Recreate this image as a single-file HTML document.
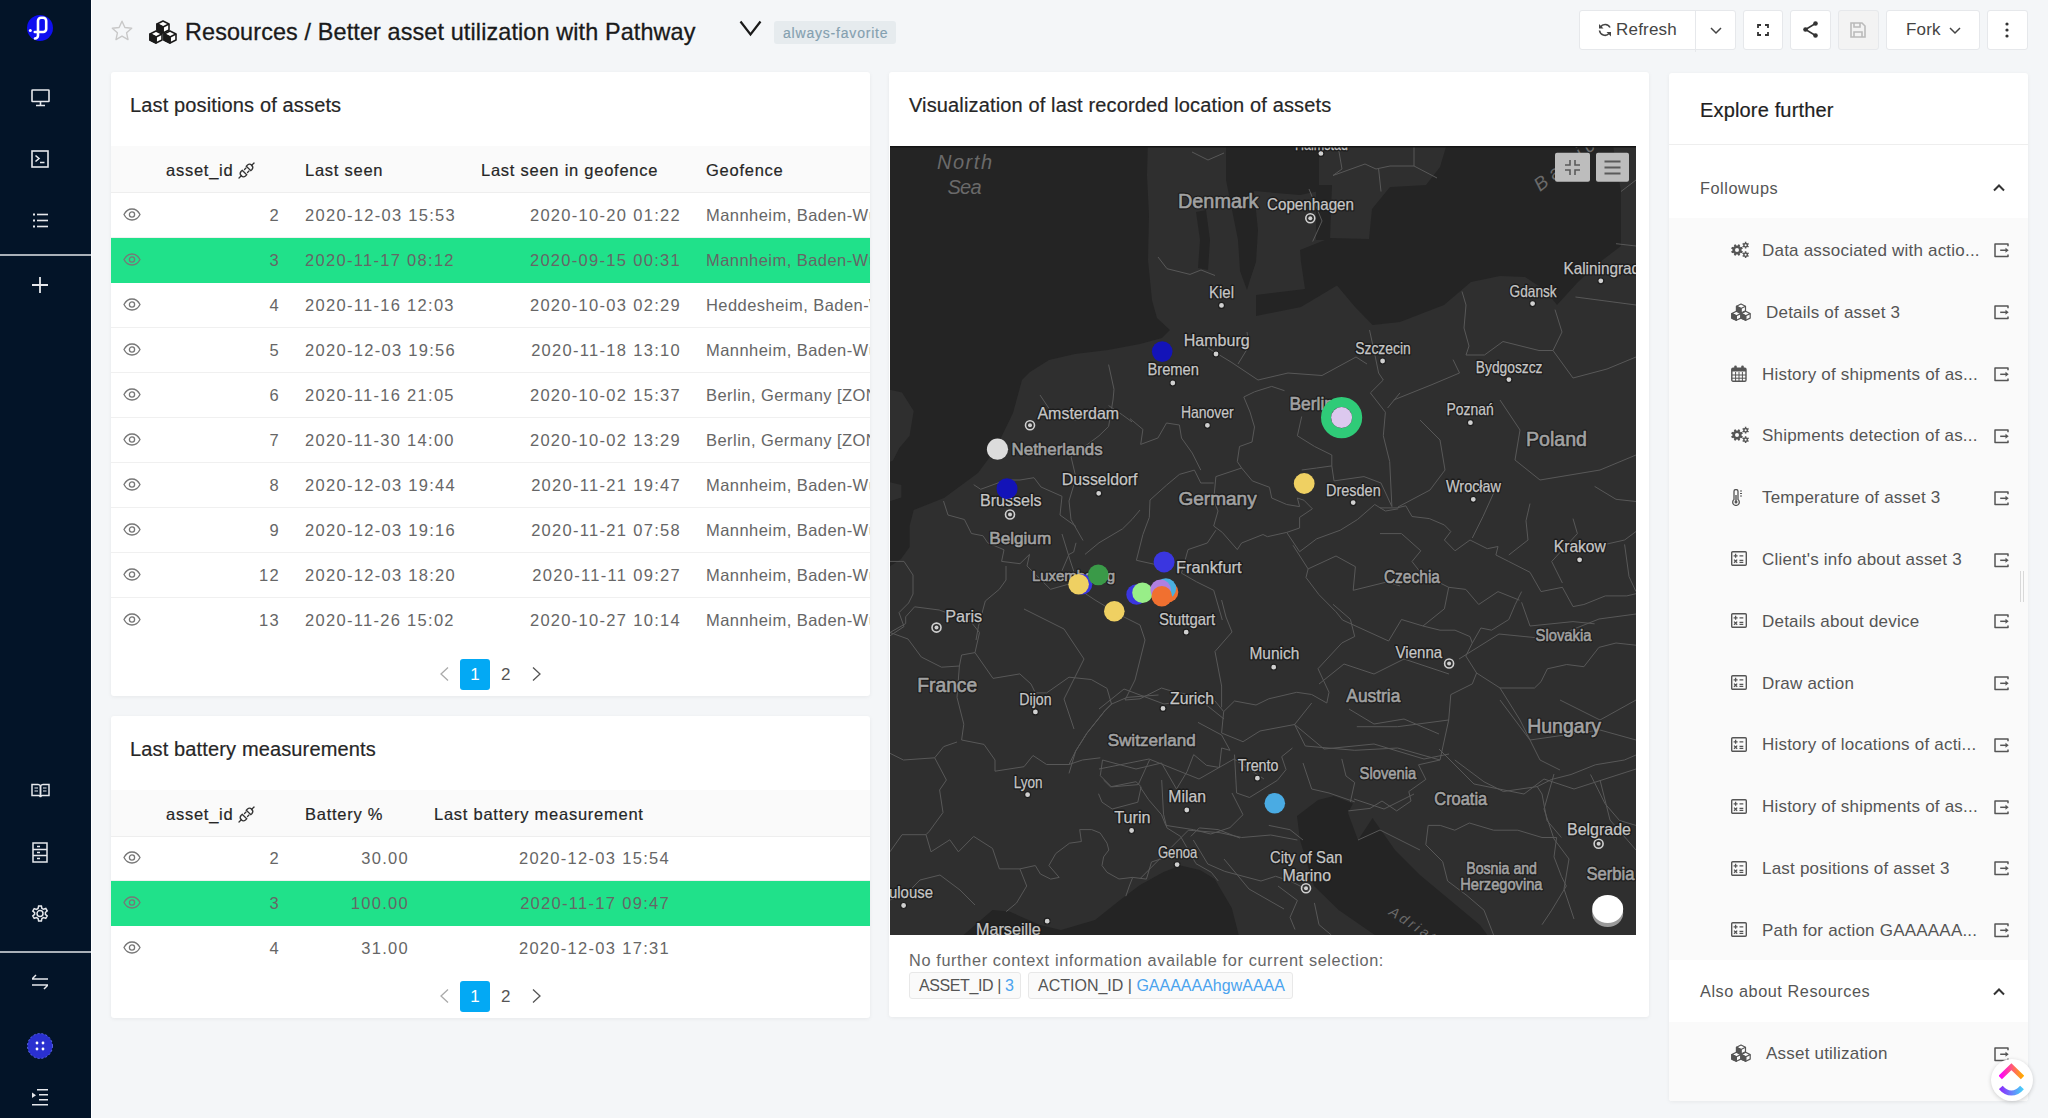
<!DOCTYPE html>
<html><head><meta charset="utf-8">
<style>
*{box-sizing:border-box;margin:0;padding:0}
html,body{width:2048px;height:1118px;overflow:hidden;background:#f4f6f8;font-family:"Liberation Sans",sans-serif;position:relative}
.a{position:absolute}
.t{position:absolute;white-space:nowrap;line-height:1}
.sb{left:0;top:0;width:91px;height:1118px;background:#031428}
.sbl{left:0;width:91px;height:1.5px;background:#a9b0b8}
.card{background:#fff;border-radius:3px;box-shadow:0 1px 4px rgba(0,0,0,0.06)}
.ctitle{font-size:20px;letter-spacing:0.14px;color:#262626;-webkit-text-stroke:0.2px #262626}
.thead{background:#fafafa;border-bottom:1px solid #eee}
.th{font-size:16.5px;letter-spacing:0.75px;color:#262626;-webkit-text-stroke:0.2px #262626}
.row{left:0;width:759px;height:45px;border-bottom:1px solid #f0f0f0}
.row.sel{background:#20e18a;border-bottom-color:#20e18a}
.td{font-size:16.5px;letter-spacing:1.3px;color:#666}
.pg1{width:30px;height:31px;background:#03a9f4;border-radius:3px;color:#fff;font-size:17px;text-align:center;line-height:31px}
.btn{background:#fff;border:1px solid #e6e8eb;border-radius:3px;top:10px;height:40px}
</style></head>
<body>
<!-- SIDEBAR -->
<div class="a sb"></div>
<div class="a" style="left:91px;top:0;width:1px;height:1118px;background:#fff"></div>
<div class="a sbl" style="top:254px"></div>
<div class="a sbl" style="top:951px"></div>
<svg class="a" style="left:27px;top:15px" width="26" height="26" viewBox="0 0 26 26"><circle cx="13" cy="13" r="13" fill="#0f0ff0"/><g fill="none" stroke="#fff" stroke-width="2.6" stroke-linecap="round"><path d="M11 17V5.8a3 3 0 0 1 3-3h2.2a3 3 0 0 1 3 3v8.2a3 3 0 0 1-3 3H7.8"/><path d="M11 17v3.5a3 3 0 0 1-3 3"/></g><circle cx="3.3" cy="15.5" r="1.5" fill="#fff"/></svg><svg class="a" style="left:31px;top:89px" width="19" height="18" viewBox="0 0 19 18"><g fill="none" stroke="#e6e8ec" stroke-width="1.6"><rect x="1" y="1" width="17" height="11.5" rx="0.5"/><path d="M9.5 12.5v3.5M5 16.5h9"/></g></svg><svg class="a" style="left:31px;top:150px" width="18" height="18" viewBox="0 0 18 18"><g fill="none" stroke="#e6e8ec" stroke-width="1.6"><rect x="1" y="1" width="16" height="16"/><path d="M4.5 5.5l3.5 3-3.5 3M9 12.5h4.5"/></g></svg><svg class="a" style="left:33px;top:213px" width="15" height="15" viewBox="0 0 15 15"><g fill="#e6e8ec"><rect x="0" y="0.5" width="2" height="2"/><rect x="0" y="6.5" width="2" height="2"/><rect x="0" y="12.5" width="2" height="2"/><rect x="4" y="0.7" width="11" height="1.6"/><rect x="4" y="6.7" width="11" height="1.6"/><rect x="4" y="12.7" width="11" height="1.6"/></g></svg><svg class="a" style="left:32px;top:277px" width="16" height="16" viewBox="0 0 16 16"><g stroke="#e6e8ec" stroke-width="1.8"><path d="M8 0v16M0 8h16"/></g></svg><svg class="a" style="left:31px;top:782px" width="19" height="16" viewBox="0 0 19 16"><g fill="none" stroke="#e6e8ec" stroke-width="1.5"><path d="M1 2.5h6a2.5 2.5 0 0 1 2.5 2V15a2 2 0 0 0-2-1.5H1z"/><path d="M18 2.5h-6a2.5 2.5 0 0 0-2.5 2V15a2 2 0 0 1 2-1.5H18z"/><path d="M3.5 6h3.5M3.5 9h3.5M12 6h3.5M12 9h3.5" stroke-width="1.2"/></g></svg><svg class="a" style="left:32px;top:842px" width="16" height="21" viewBox="0 0 16 21"><g fill="none" stroke="#e6e8ec" stroke-width="1.5"><rect x="1" y="1" width="14" height="19"/><path d="M1 7.5h14M1 13.5h14M5 4.5h3M5 10.5h3M5 16.5h3" stroke-width="1.3"/></g></svg><svg class="a" style="left:30px;top:905px" width="20" height="18" viewBox="0 0 20 18"><g fill="none" stroke="#e6e8ec" stroke-width="1.5"><path d="M8.6 1h2.8l.5 2.4 1.6.9 2.3-.8 1.4 2.4-1.8 1.6v1.9l1.8 1.6-1.4 2.4-2.3-.8-1.6.9-.5 2.4H8.6l-.5-2.4-1.6-.9-2.3.8-1.4-2.4 1.8-1.6V7.6L2.8 6l1.4-2.4 2.3.8 1.6-.9z" transform="translate(0,0)"/><circle cx="10" cy="8.6" r="3"/></g></svg><svg class="a" style="left:32px;top:974px" width="16" height="16" viewBox="0 0 16 16"><g fill="none" stroke="#e6e8ec" stroke-width="1.5"><path d="M16 5H0l4-4M0 11h16l-4 4"/></g></svg><svg class="a" style="left:27px;top:1033px" width="26" height="26" viewBox="0 0 26 26"><circle cx="13" cy="13" r="12.5" fill="#2a30d0" stroke="#6b77ff" stroke-width="0.8" stroke-dasharray="2 2"/><g fill="#fff"><circle cx="10" cy="10" r="1.4"/><circle cx="16" cy="10" r="1.4"/><circle cx="10" cy="16" r="1.4"/><circle cx="16" cy="16" r="1.4"/></g></svg><svg class="a" style="left:32px;top:1089px" width="16" height="17" viewBox="0 0 16 17"><g fill="#e6e8ec"><rect x="5" y="0" width="11" height="1.5"/><rect x="7" y="5" width="9" height="1.5"/><rect x="7" y="10" width="9" height="1.5"/><rect x="0" y="15" width="16" height="1.5"/><path d="M0 3.5l4 2.8-4 2.8z"/></g></svg>

<!-- HEADER -->
<svg class="a" style="left:111px;top:20px" width="22" height="21" viewBox="0 0 22 21"><path d="M11 1.2l2.9 6.3 6.8.7-5.1 4.6 1.4 6.8L11 16.1l-6 3.5 1.4-6.8L1.3 8.2l6.8-.7z" fill="none" stroke="#c8c8c8" stroke-width="1.4" stroke-linejoin="round"/></svg><svg class="a" style="left:149px;top:20px" width="28" height="24" viewBox="0 0 28 24"><g stroke="#1a1a1a" stroke-width="1.6" stroke-linejoin="round"><path d="M14 1l6 3v6l-6 3-6-3V4z" fill="#fff"/><path d="M8 4l6 3 6-3M14 7v6" fill="none"/><path d="M8 4v6l6 3V7z" fill="#1a1a1a"/><path d="M7 11l6 3v6l-6 3-6-3v-6z" fill="#fff"/><path d="M1 14l6 3 6-3M7 17v6" fill="none"/><path d="M1 14v6l6 3v-6z" fill="#1a1a1a"/><path d="M21 11l6 3v6l-6 3-6-3v-6z" fill="#fff"/><path d="M15 14l6 3 6-3M21 17v6" fill="none"/><path d="M15 14v6l6 3v-6z" fill="#1a1a1a"/></g></svg><div class="t" style="left:185px;top:21px;font-size:23.4px;letter-spacing:0.125px;color:#1a1a1a;-webkit-text-stroke:0.3px #1a1a1a">Resources / Better asset utilization with Pathway</div><svg class="a" style="left:739px;top:20px" width="23" height="17" viewBox="0 0 23 17"><path d="M1.5 1.5l10 13 10-13" fill="none" stroke="#1a1a1a" stroke-width="2.2"/></svg><div class="a" style="left:774px;top:21px;width:122px;height:23px;background:#e6ebee;border-radius:3px"></div><div class="t" style="left:783px;top:25.5px;font-size:14px;letter-spacing:0.8px;color:#84a0b0;-webkit-text-stroke:0.15px #84a0b0">always-favorite</div><div class="a btn" style="left:1579px;width:157px;background:#fff"></div><div class="a" style="left:1695px;top:10px;width:1px;height:42px;background:#e6e8eb"></div><svg class="a" style="left:1598px;top:22px" width="14" height="16" viewBox="0 0 14 16"><g fill="none" stroke="#444" stroke-width="1.6"><path d="M12 5.5A5.5 5.5 0 0 0 2.5 5"/><path d="M1.5 8.5A5.5 5.5 0 0 0 11 11.5"/></g><path d="M1 2v4.5h4.5z" fill="#444"/><path d="M13 14.5V10H8.5z" fill="#444"/></svg><div class="t" style="left:1616px;top:21px;font-size:17px;letter-spacing:0.2px;color:#444">Refresh</div><svg class="a" style="left:1710px;top:27px" width="12" height="8" viewBox="0 0 12 8"><path d="M1 1l5 5 5-5" fill="none" stroke="#444" stroke-width="1.5"/></svg><div class="a btn" style="left:1743px;width:40px;background:#fff"></div><svg class="a" style="left:1757px;top:24px" width="12" height="12" viewBox="0 0 12 12"><g fill="none" stroke="#333" stroke-width="1.8"><path d="M1 4V1h3M8 1h3v3M11 8v3H8M4 11H1V8"/></g></svg><div class="a btn" style="left:1790px;width:41px;background:#fff"></div><svg class="a" style="left:1803px;top:21px" width="15" height="17" viewBox="0 0 15 17"><g fill="#333"><circle cx="12.5" cy="2.5" r="2.3"/><circle cx="2.5" cy="8.5" r="2.3"/><circle cx="12.5" cy="14.5" r="2.3"/></g><path d="M12.5 2.5L2.5 8.5l10 6" fill="none" stroke="#333" stroke-width="1.6"/></svg><div class="a btn" style="left:1838px;width:41px;background:#f3f3f3"></div><svg class="a" style="left:1850px;top:22px" width="16" height="16" viewBox="0 0 16 16"><g fill="none" stroke="#bbb" stroke-width="1.6"><path d="M1 1h11l3 3v11H1z"/><path d="M4 1v4h6V1M4 15v-5h8v5"/></g></svg><div class="a btn" style="left:1886px;width:94px;background:#fff"></div><div class="t" style="left:1906px;top:21px;font-size:17px;letter-spacing:0.2px;color:#444">Fork</div><svg class="a" style="left:1949px;top:27px" width="12" height="8" viewBox="0 0 12 8"><path d="M1 1l5 5 5-5" fill="none" stroke="#444" stroke-width="1.5"/></svg><div class="a btn" style="left:1987px;width:41px;background:#fff"></div><svg class="a" style="left:2005px;top:22px" width="4" height="16" viewBox="0 0 4 16"><g fill="#333"><circle cx="2" cy="2" r="1.6"/><circle cx="2" cy="8" r="1.6"/><circle cx="2" cy="14" r="1.6"/></g></svg>

<!-- CARD 1 -->
<div class="a card" style="left:111px;top:72px;width:759px;height:624px;overflow:hidden">
  <div class="t ctitle" style="left:19px;top:23px">Last positions of assets</div>
  <div class="a thead" style="left:0;top:74px;width:759px;height:47px"></div><div class="t th" style="left:55px;top:90px">asset_id</div><div class="t th" style="left:194px;top:90px">Last seen</div><div class="t th" style="left:370px;top:90px">Last seen in geofence</div><div class="t th" style="left:595px;top:90px">Geofence</div><svg width="17" height="17" viewBox="0 0 17 17" style="position:absolute;left:127px;top:90px"><g fill="none" stroke="#333" stroke-width="1.3" stroke-linecap="round"><path d="M1 16l2.5-2.5"/><path d="M16 1l-2.5 2.5"/><path d="M4.2 8.3l4.5 4.5-1.2 1.2a3.2 3.2 0 0 1-4.5-4.5z"/><path d="M8.3 4.2l4.5 4.5 1.2-1.2a3.2 3.2 0 0 0-4.5-4.5z"/><path d="M6.5 7.5l1.5-1.5M9.5 10.5l1.5-1.5"/></g></svg><div class="a row" style="top:121px"></div><svg width="18" height="13" viewBox="0 0 18 13" style="position:absolute;left:12px;top:136px"><path d="M1 6.5C3 2.6 5.8 1 9 1s6 1.6 8 5.5C15 10.4 12.2 12 9 12S3 10.4 1 6.5z" fill="none" stroke="#777" stroke-width="1.3"/><circle cx="9" cy="6.5" r="2.6" fill="none" stroke="#777" stroke-width="1.3"/></svg><div class="t td" style="right:590px;top:135px">2</div><div class="t td" style="left:194px;top:135px">2020-12-03 15:53</div><div class="t td" style="right:189px;top:135px">2020-10-20 01:22</div><div class="t td" style="left:595px;top:135px;letter-spacing:0.45px">Mannheim, Baden-Württemberg</div><div class="a row sel" style="top:166px"></div><svg width="18" height="13" viewBox="0 0 18 13" style="position:absolute;left:12px;top:181px"><path d="M1 6.5C3 2.6 5.8 1 9 1s6 1.6 8 5.5C15 10.4 12.2 12 9 12S3 10.4 1 6.5z" fill="none" stroke="#777" stroke-width="1.3"/><circle cx="9" cy="6.5" r="2.6" fill="none" stroke="#777" stroke-width="1.3"/></svg><div class="t td" style="right:590px;top:180px">3</div><div class="t td" style="left:194px;top:180px">2020-11-17 08:12</div><div class="t td" style="right:189px;top:180px">2020-09-15 00:31</div><div class="t td" style="left:595px;top:180px;letter-spacing:0.45px">Mannheim, Baden-Württemberg</div><div class="a row" style="top:211px"></div><svg width="18" height="13" viewBox="0 0 18 13" style="position:absolute;left:12px;top:226px"><path d="M1 6.5C3 2.6 5.8 1 9 1s6 1.6 8 5.5C15 10.4 12.2 12 9 12S3 10.4 1 6.5z" fill="none" stroke="#777" stroke-width="1.3"/><circle cx="9" cy="6.5" r="2.6" fill="none" stroke="#777" stroke-width="1.3"/></svg><div class="t td" style="right:590px;top:225px">4</div><div class="t td" style="left:194px;top:225px">2020-11-16 12:03</div><div class="t td" style="right:189px;top:225px">2020-10-03 02:29</div><div class="t td" style="left:595px;top:225px;letter-spacing:0.45px">Heddesheim, Baden-Württemberg</div><div class="a row" style="top:256px"></div><svg width="18" height="13" viewBox="0 0 18 13" style="position:absolute;left:12px;top:271px"><path d="M1 6.5C3 2.6 5.8 1 9 1s6 1.6 8 5.5C15 10.4 12.2 12 9 12S3 10.4 1 6.5z" fill="none" stroke="#777" stroke-width="1.3"/><circle cx="9" cy="6.5" r="2.6" fill="none" stroke="#777" stroke-width="1.3"/></svg><div class="t td" style="right:590px;top:270px">5</div><div class="t td" style="left:194px;top:270px">2020-12-03 19:56</div><div class="t td" style="right:189px;top:270px">2020-11-18 13:10</div><div class="t td" style="left:595px;top:270px;letter-spacing:0.45px">Mannheim, Baden-Württemberg</div><div class="a row" style="top:301px"></div><svg width="18" height="13" viewBox="0 0 18 13" style="position:absolute;left:12px;top:316px"><path d="M1 6.5C3 2.6 5.8 1 9 1s6 1.6 8 5.5C15 10.4 12.2 12 9 12S3 10.4 1 6.5z" fill="none" stroke="#777" stroke-width="1.3"/><circle cx="9" cy="6.5" r="2.6" fill="none" stroke="#777" stroke-width="1.3"/></svg><div class="t td" style="right:590px;top:315px">6</div><div class="t td" style="left:194px;top:315px">2020-11-16 21:05</div><div class="t td" style="right:189px;top:315px">2020-10-02 15:37</div><div class="t td" style="left:595px;top:315px;letter-spacing:0.45px">Berlin, Germany [ZONE]</div><div class="a row" style="top:346px"></div><svg width="18" height="13" viewBox="0 0 18 13" style="position:absolute;left:12px;top:361px"><path d="M1 6.5C3 2.6 5.8 1 9 1s6 1.6 8 5.5C15 10.4 12.2 12 9 12S3 10.4 1 6.5z" fill="none" stroke="#777" stroke-width="1.3"/><circle cx="9" cy="6.5" r="2.6" fill="none" stroke="#777" stroke-width="1.3"/></svg><div class="t td" style="right:590px;top:360px">7</div><div class="t td" style="left:194px;top:360px">2020-11-30 14:00</div><div class="t td" style="right:189px;top:360px">2020-10-02 13:29</div><div class="t td" style="left:595px;top:360px;letter-spacing:0.45px">Berlin, Germany [ZONE]</div><div class="a row" style="top:391px"></div><svg width="18" height="13" viewBox="0 0 18 13" style="position:absolute;left:12px;top:406px"><path d="M1 6.5C3 2.6 5.8 1 9 1s6 1.6 8 5.5C15 10.4 12.2 12 9 12S3 10.4 1 6.5z" fill="none" stroke="#777" stroke-width="1.3"/><circle cx="9" cy="6.5" r="2.6" fill="none" stroke="#777" stroke-width="1.3"/></svg><div class="t td" style="right:590px;top:405px">8</div><div class="t td" style="left:194px;top:405px">2020-12-03 19:44</div><div class="t td" style="right:189px;top:405px">2020-11-21 19:47</div><div class="t td" style="left:595px;top:405px;letter-spacing:0.45px">Mannheim, Baden-Württemberg</div><div class="a row" style="top:436px"></div><svg width="18" height="13" viewBox="0 0 18 13" style="position:absolute;left:12px;top:451px"><path d="M1 6.5C3 2.6 5.8 1 9 1s6 1.6 8 5.5C15 10.4 12.2 12 9 12S3 10.4 1 6.5z" fill="none" stroke="#777" stroke-width="1.3"/><circle cx="9" cy="6.5" r="2.6" fill="none" stroke="#777" stroke-width="1.3"/></svg><div class="t td" style="right:590px;top:450px">9</div><div class="t td" style="left:194px;top:450px">2020-12-03 19:16</div><div class="t td" style="right:189px;top:450px">2020-11-21 07:58</div><div class="t td" style="left:595px;top:450px;letter-spacing:0.45px">Mannheim, Baden-Württemberg</div><div class="a row" style="top:481px"></div><svg width="18" height="13" viewBox="0 0 18 13" style="position:absolute;left:12px;top:496px"><path d="M1 6.5C3 2.6 5.8 1 9 1s6 1.6 8 5.5C15 10.4 12.2 12 9 12S3 10.4 1 6.5z" fill="none" stroke="#777" stroke-width="1.3"/><circle cx="9" cy="6.5" r="2.6" fill="none" stroke="#777" stroke-width="1.3"/></svg><div class="t td" style="right:590px;top:495px">12</div><div class="t td" style="left:194px;top:495px">2020-12-03 18:20</div><div class="t td" style="right:189px;top:495px">2020-11-11 09:27</div><div class="t td" style="left:595px;top:495px;letter-spacing:0.45px">Mannheim, Baden-Württemberg</div><div class="a row" style="top:526px;border-bottom:0"></div><svg width="18" height="13" viewBox="0 0 18 13" style="position:absolute;left:12px;top:541px"><path d="M1 6.5C3 2.6 5.8 1 9 1s6 1.6 8 5.5C15 10.4 12.2 12 9 12S3 10.4 1 6.5z" fill="none" stroke="#777" stroke-width="1.3"/><circle cx="9" cy="6.5" r="2.6" fill="none" stroke="#777" stroke-width="1.3"/></svg><div class="t td" style="right:590px;top:540px">13</div><div class="t td" style="left:194px;top:540px">2020-11-26 15:02</div><div class="t td" style="right:189px;top:540px">2020-10-27 10:14</div><div class="t td" style="left:595px;top:540px;letter-spacing:0.45px">Mannheim, Baden-Württemberg</div><svg class="a" style="left:328px;top:594px" width="10" height="16" viewBox="0 0 10 16"><path d="M9 1.5L2 8l7 6.5" fill="none" stroke="#aaa" stroke-width="1.3"/></svg><div class="a pg1" style="left:349px;top:587px">1</div><div class="t td" style="left:390px;top:594px;letter-spacing:0;font-size:17px;color:#555">2</div><svg class="a" style="left:421px;top:594px" width="10" height="16" viewBox="0 0 10 16"><path d="M1 1.5L8 8l-7 6.5" fill="none" stroke="#555" stroke-width="1.3"/></svg>
  
</div>

<!-- CARD 2 -->
<div class="a card" style="left:111px;top:716px;width:759px;height:302px;overflow:hidden">
  <div class="t ctitle" style="left:19px;top:23px">Last battery measurements</div>
  <div class="a thead" style="left:0;top:74px;width:759px;height:47px"></div><div class="t th" style="left:55px;top:90px">asset_id</div><div class="t th" style="left:194px;top:90px">Battery %</div><div class="t th" style="left:323px;top:90px">Last battery measurement</div><svg width="17" height="17" viewBox="0 0 17 17" style="position:absolute;left:127px;top:90px"><g fill="none" stroke="#333" stroke-width="1.3" stroke-linecap="round"><path d="M1 16l2.5-2.5"/><path d="M16 1l-2.5 2.5"/><path d="M4.2 8.3l4.5 4.5-1.2 1.2a3.2 3.2 0 0 1-4.5-4.5z"/><path d="M8.3 4.2l4.5 4.5 1.2-1.2a3.2 3.2 0 0 0-4.5-4.5z"/><path d="M6.5 7.5l1.5-1.5M9.5 10.5l1.5-1.5"/></g></svg><div class="a row" style="top:120px"></div><svg width="18" height="13" viewBox="0 0 18 13" style="position:absolute;left:12px;top:135px"><path d="M1 6.5C3 2.6 5.8 1 9 1s6 1.6 8 5.5C15 10.4 12.2 12 9 12S3 10.4 1 6.5z" fill="none" stroke="#777" stroke-width="1.3"/><circle cx="9" cy="6.5" r="2.6" fill="none" stroke="#777" stroke-width="1.3"/></svg><div class="t td" style="right:590px;top:134px">2</div><div class="t td" style="right:461px;top:134px">30.00</div><div class="t td" style="right:200px;top:134px">2020-12-03 15:54</div><div class="a row sel" style="top:165px"></div><svg width="18" height="13" viewBox="0 0 18 13" style="position:absolute;left:12px;top:180px"><path d="M1 6.5C3 2.6 5.8 1 9 1s6 1.6 8 5.5C15 10.4 12.2 12 9 12S3 10.4 1 6.5z" fill="none" stroke="#777" stroke-width="1.3"/><circle cx="9" cy="6.5" r="2.6" fill="none" stroke="#777" stroke-width="1.3"/></svg><div class="t td" style="right:590px;top:179px">3</div><div class="t td" style="right:461px;top:179px">100.00</div><div class="t td" style="right:200px;top:179px">2020-11-17 09:47</div><div class="a row" style="top:210px;border-bottom:0"></div><svg width="18" height="13" viewBox="0 0 18 13" style="position:absolute;left:12px;top:225px"><path d="M1 6.5C3 2.6 5.8 1 9 1s6 1.6 8 5.5C15 10.4 12.2 12 9 12S3 10.4 1 6.5z" fill="none" stroke="#777" stroke-width="1.3"/><circle cx="9" cy="6.5" r="2.6" fill="none" stroke="#777" stroke-width="1.3"/></svg><div class="t td" style="right:590px;top:224px">4</div><div class="t td" style="right:461px;top:224px">31.00</div><div class="t td" style="right:200px;top:224px">2020-12-03 17:31</div><svg class="a" style="left:328px;top:272px" width="10" height="16" viewBox="0 0 10 16"><path d="M9 1.5L2 8l7 6.5" fill="none" stroke="#aaa" stroke-width="1.3"/></svg><div class="a pg1" style="left:349px;top:265px">1</div><div class="t td" style="left:390px;top:272px;letter-spacing:0;font-size:17px;color:#555">2</div><svg class="a" style="left:421px;top:272px" width="10" height="16" viewBox="0 0 10 16"><path d="M1 1.5L8 8l-7 6.5" fill="none" stroke="#555" stroke-width="1.3"/></svg>
  
</div>

<!-- MAP CARD -->
<div class="a card" style="left:889px;top:72px;width:760px;height:945px;overflow:hidden">
  <div class="t ctitle" style="left:20px;top:23px">Visualization of last recorded location of assets</div>
  <div id="map" class="a" style="left:1px;top:74px;width:746px;height:789px;background:#333;overflow:hidden"><svg width="746" height="789" viewBox="0 0 746 789" style="position:absolute;left:0;top:0"><rect width="746" height="789" fill="#2f2f2f"/><polygon points="-1,-6 258,-6 257,29 259,69 258,114 262,154 267,172 280,184 272,192 250,198 218,204 185,208 159,214 140,226 132,234 123,267 105,304 88,327 54,352 23.7,364 19.6,380 19.6,401 11,413 -1,421" fill="#242424"/><polygon points="558,-6 550,21 536,39 500,41 482,63 479,93 440,92 410,104 411,116 415,143 366,149 366,170 411,161 447,139.5 465,161 482.6,179 510,176 554,159 581,136 610,130 635,131 655,144 667,159 688,136 710,116 731,100 731,45 722,-6" fill="#242424"/><polygon points="336,-6 429,-6 429,45 410,49 364,45 368,84 366,116 360,134 357,144 350,125 348,94 340,54 336,34" fill="#242424"/><polygon points="426,39 442,39 440,94 426,94" fill="#242424"/><polygon points="306,66 316,64 320,94 318,124 308,122 310,94" fill="#242424"/><polygon points="70,794 73.5,789 102.5,764 119.6,765.6 150,779 171,784 205,774 230.7,753.6 250,739 273.5,726 290.5,719.5 310,724 324.7,733 341.8,762 350,794" fill="#242424"/><polygon points="492,794 448.6,764 424,740 410,694 407,670 428,654 443.8,650 463,657.6 458,667 468,694 482.5,672 505,704 530,729 560,754 590,779 601,794" fill="#242424"/><polygon points="-1,243.5 12,246.6 23.7,265 19.6,289.8 9.3,302 3,314.5 -1,316" fill="#2f2f2f"/><polygon points="-1,336 11.3,339 11.3,351.6 -1,355.7" fill="#2f2f2f"/><polygon points="731,0 746,0 746,100 731,100" fill="#2f2f2f"/><g fill="none" stroke="#585858" stroke-width="1" stroke-linejoin="round"><polyline points="268,111 277,122.7 300,128.4 311,124 325,129.5"/><polyline points="302,6 318,14 334,7"/><polyline points="419,43 432,75 422.7,95.5"/><polyline points="448,0 452,23 443,29.5 475,18 486,23 500,20 524,20 547,32"/><polyline points="488.6,23 491,45.5"/><polyline points="524,0 524,20"/><polyline points="318,202 341,216 368,234 398,227 432,229.5 466,211 477,218"/><polyline points="348,218 359,200 357,186"/><polyline points="479.5,184 484,204.5 488.6,227 493.3,234 480.4,246.9 495.4,266.2 493.3,289.8 499.7,315.6 501.9,360.6"/><polyline points="572,145.5 576,159 574,182 579,200 576,209 594.5,209 613,195.5 649,204.5 663,204.5 672,186 665,163.6"/><polyline points="663,204.5 683,232 717,223 746,211"/><polyline points="685.5,151 746,159"/><polyline points="731,45.5 746,34"/><polyline points="726,97.7 746,100"/><polyline points="563,213.6 569.5,227 542,238.6 503.6,254"/><polyline points="603.7,346.9 593,370.5 582.3,392"/><polyline points="640,357.6 636,374.8 638,394 618.8,409"/><polyline points="683,372.6 687.4,387.6 661.7,415.5 672.4,437"/><polyline points="704.6,340.4 726,353.3 746,355.5"/><polyline points="715.3,398.4 734.6,394 746,385.5"/><polyline points="734.6,398.4 739,430.6 746,445.6"/><polyline points="510,246.9 497.6,262"/><polyline points="530,274 550,294 555,324 540,344 508,361"/><polyline points="610,254 630,284 625,314 650,334 710,324 746,309"/><polyline points="218.6,218.6 224,243.3 223,254 218.6,280.5 209,289.8 181,310.7 186,331.7 179,355 181,373.5 193,394.5"/><polyline points="83.7,338.7 90.7,343.3 116,334 130,334 144,331.7 151,341 172,350.3 170,369 186,380.5"/><polyline points="53.5,355 58,369 74.4,373.5 81.4,387.5 93,389.8 97.7,396.8 114,403.8 111.6,415.4 130,417.7 139.5,408.4 137,420 160.5,443.3 176.7,438.7 195,438.7"/><polyline points="172,424.7 179,408.4 183.7,406 186,396.8"/><polyline points="150,249 160,264 185,274 200,269"/><polyline points="218.6,259.6 232.6,269 242,275.9"/><polyline points="250,364 242,373.5 232.6,382.8 209,396.8 195,408.4"/><polyline points="0,415.4 14,415.4 23,429 23,448 18.6,457 9,466.6 14,480.5 0,489.8"/><polyline points="116,420 116,434 109.3,443.3 95.3,455 88.4,480.5 86,494"/><polyline points="0,486.5 15.7,477.6 15.7,470.8 24.6,460.8 49.2,464 80.5,475.3 89.5,486.5 85,506.6 71.6,509 69.4,520 51.5,521.2 31.3,511 18,493 0,486.5"/><polyline points="85,506.6 103,532.4 129.8,527.9 141,538 145.4,546.9 156.6,546.9 179,531.2 201.3,533.5 217,542.4 221.5,558.1 237,551.4 268.5,549"/><polyline points="69.4,520 67,551.4 73.8,578.2 71.6,594 94,598.4 105,614 105,625.2 134,620.7 143,609.5 156.6,618.5 179,618.5 185.7,605 196.9,587.2 214.8,564.8 221.5,558.1"/><polyline points="0,607.3 13.4,614 44.7,611.8 53.7,600.6 67,596"/><polyline points="179,618.5 192.4,614 210.3,611.8"/><polyline points="172,388 180,414 190,444 205,454 230,469 250,479 255,494 245,534 235,554"/><polyline points="353.8,251 360,266 364.5,281 362,296 349.5,300.5 347.3,315.6 351.6,322"/><polyline points="353.8,251 364.5,245.8 381.7,240.4 394.5,244.7"/><polyline points="411.7,270.5 407.4,289.8 424.6,300.5 441.8,309 441.8,319.9 426.7,322 411.7,324"/><polyline points="441.8,319.9 444,334.9 474,330.6 491,337 501.9,360.6"/><polyline points="325.9,330.6 351.6,322 362.3,334.9 379.5,341.3 381.7,352 396.7,358.5 409.6,360.6 407.4,352 413.9,354.2 422.4,362.8 409.6,371.4 409.6,382 396.7,386.4 377.4,390.7 373,388.5 351.6,397 347.3,403.6 332.3,386.4 323.7,380 328,365 323.7,354.2 325.9,330.6"/><polyline points="396.7,386.4 409.6,405.7 426.7,392.8 450.3,384.2 467.5,373.5 484.7,358.5 495.4,365 508.3,362.8"/><polyline points="403,399.3 418.1,422.9 416,431.5 428.9,448.6 446,465.8 452.5,474"/><polyline points="418.1,422.9 446,410 465.4,420.7 463.2,444.3 497.6,435.8 510,440"/><polyline points="276.5,339.2 289.4,328.4 304.4,324.1 310.8,337 323.7,337"/><polyline points="259.3,371.4 252.9,388.5 246.4,414.3 265.8,418.6"/><polyline points="325.9,384.2 317.3,397 298,403.6 291.5,427.2 306.5,435.8 323.7,444.3 332.3,474"/><polyline points="240,272.6 252.9,283.4 250.7,298.4 267.9,292 276.5,277 289.4,279 291.5,292 302.2,307 310.8,324.1"/><polyline points="331.6,454 336,471 342,486 325,505.5 331.6,540 331.6,561.3"/><polyline points="276.5,339.2 260,354 259.3,371.4"/><polyline points="235,554 250,552.8 271.5,542 278,544 325,555 333.7,565.6 344.5,555 366,559 378.8,552.8 406.7,546.3 421.7,548.5 436.8,557 439,546.3 428,522.7 451.8,497 464.7,490.5 460.4,473.3 443,458.3"/><polyline points="333.7,565.6 331.6,587 353,595.7 370,585 404.6,578.5 415.3,600 464.7,604.3 507.6,602 550,614"/><polyline points="404.6,578.5 421.7,557"/><polyline points="466.8,580.7 507.6,580.7 558.7,574"/><polyline points="308,576.4 331.6,589 340,604.3 331.6,602 329.4,621.5 316.5,619.3 303.7,608.6 297,625.7 286.5,643 271.5,617 246,623 212.5,614 210.3,629.7 221.5,640.9 248.3,638.6 259.5,614"/><polyline points="221.5,558.1 214.8,564.8 196.9,587.2 185.7,605 179,627.4"/><polyline points="344.5,608.6 346.6,647 359.5,651.5 387.4,634.3 396,623.6 391.7,610.7 402.4,602"/><polyline points="413,617 421.7,643 439,647 464.7,655.8"/><polyline points="451.8,612.9 456,630 464.7,636.5 460.4,655.8"/><polyline points="250,640.8 258.6,653.7 271.5,668.7 275.8,679.4 303.7,683.7 320.8,688 340,681.6 353,668.7 342,647"/><polyline points="378.8,679.4 400,683.7 413,694"/><polyline points="250,732.7 298.4,684.2 330,686.7 351.7,691.5 380.8,689 407.4,694"/><polyline points="303.3,694 317.8,718 334.8,725.4 371,735 385.6,730.3 400.2,735 419.5,744.8"/><polyline points="388,740 407.4,754.5 400,771.4 405,783.5"/><polyline points="424.4,756.9 429,778.7 441.3,789"/><polyline points="490,361.9 507,361.9 515.8,359.8 522,370.5 539.4,372.6 554.4,379 560.8,385.5 554.4,394 565,404.8 580,394 597.3,402.7 608,400.5 605.9,409 618.8,415.5 640,426.3 651,445.6 672.4,441.3 683,460.6 693.9,458.5 715.3,449.9 736.8,449.9 746,447.7"/><polyline points="631.6,445.6 625.2,458.5 618.8,473.5 601.6,484.2 590.9,482 582.3,497"/><polyline points="452.5,474 498.6,495 511.5,473.5 533,480 550,484.2 565,484.2 580,490.6 582.3,497"/><polyline points="582.3,497 575.8,510 586.6,527 610,542 644.5,542 651,535.7 657.4,522.8 676.7,518.5 693.9,520.7 708.9,501.4 726,497 746,499.2"/><polyline points="586.6,527 582.3,537.9 560.8,548.6 558.7,574 550,614"/><polyline points="631.6,456.3 640,480 683,475.6 704.6,477.8"/><polyline points="490,387.6 511.5,387.6 530.8,404.8 522,415.5 528.6,424 545.8,434.9 558.7,441.3 554.4,462.8 533,480"/><polyline points="558.7,441.3 575.8,443.4 588.7,458.5 608,445.6 629.5,454.2"/><polyline points="610,542 630,574 650,614 670,624"/><polyline points="670,554 710,574 746,554"/><polyline points="458.3,664.9 480,662.4 492,655 506.7,664.9 521,655 518.8,645.5 535.8,633.4 528.5,618.8 550,614"/><polyline points="564.8,614 594,635.8 613.3,645.5 647.2,640.6 661.7,633.4 681,628.5 705.3,618.8 734.4,614 746,609"/><polyline points="538.2,679.4 550.3,679.4 564.8,684.2 579.4,677 603.6,684.2 627.8,684.2 652,691.5 666.6,691.5"/><polyline points="538.2,679.4 535.8,698.8 552.7,715.7 557.6,735 577,749.6 594,764.2 603.6,789"/><polyline points="666.6,691.5 664,710.9 671.4,730.3 676.3,740 661.7,764.2 652,778.7"/><polyline points="647.2,640.6 652,648 657,674.5 671.4,691.5"/><polyline points="700.5,628.5 715,657.6 729.5,674.5 746,679.4"/><polyline points="468,694 490,684 510,694 530,704"/><polyline points="429,538 454,518 484,528 514,513 559,528"/><polyline points="459,563 484,578 514,573 549,588"/><polyline points="404,578 434,603 484,598 534,613 559,608"/><polyline points="549,603 584,638 634,648 654,633 684,643 746,623"/><polyline points="569,513 609,488 659,493 709,473 746,468"/><polyline points="209,623 259,613 309,633 344,613 374,633"/><polyline points="334,713 359,743 394,763"/><polyline points="464,653 494,663 524,648"/><polyline points="664,628 654,663 664,693 679,713 674,743 684,773"/><polyline points="134,463 174,483 194,513 174,553 184,583"/><polyline points="209,563 234,543 274,558 309,553 334,573"/><polyline points="610,554 640,594 710,584 746,594"/><polyline points="710,634 720,674 746,704"/><polyline points="44.7,611.8 56.4,634 49.6,644 53,666.5 39.3,685.3 36,688.7 12,688.7 0,705.8"/><polyline points="36,688.7 41,705.8 59.8,693.8 68.4,705.8 83.7,690.4 102.5,702.4 109.4,722.9 129.9,722.9 145.3,719.5 150.4,728 160.7,733.1 169.2,731.4 158.9,719.5 165.8,707.5 179.5,697.2 191.4,695.5 189.7,683.6 201.7,683.6"/><polyline points="129.9,722.9 136.7,740 126.5,757 116.2,765.6"/><polyline points="201.7,683.6 210.2,687 217,697.2 218.8,704 213.6,710.9 212,719.5 217,726.3 229,733 242.7,731.4 239.3,740 235.8,750.2"/><polyline points="213.6,634 220.5,640.8 246,635.7 251.2,640.8 247.8,656.2 222.2,663 212,656.2 208.5,647.7"/><polyline points="242.7,731.4 256.4,733.1 261.5,716 276.9,710.9"/><polyline points="271.7,634 273.5,668.2 276.9,681.9 290.5,690.4 297.4,702.4 306,717.7 321.3,726.3 328.1,734.8"/><polyline points="300.8,690.4 309.3,681.9 328.1,683.6 350,692.1"/><polyline points="0,754 15,749 30,734 50,729 70,744 85,759"/></g><g font-family="Liberation Sans" font-style="italic" fill="#6a6a6a"><text x="47" y="22.7" font-size="20" textLength="55" lengthAdjust="spacing">North</text><text x="57.5" y="47.7" font-size="20" textLength="34" lengthAdjust="spacing">Sea</text><text x="0" y="0" font-size="19" letter-spacing="5" transform="translate(650,46) rotate(-38)">Baltic Sea</text><text x="0" y="0" font-size="14" letter-spacing="3" transform="translate(498,768) rotate(33)">Adriatic Sea</text></g><g fill="#d0d0d0" stroke="#1e1e1e" stroke-width="1.2"><circle cx="331.5" cy="159.4" r="3"/><circle cx="326" cy="208" r="3"/><circle cx="282.8" cy="237" r="3"/><circle cx="317.4" cy="279.3" r="3"/><circle cx="208.7" cy="347.3" r="3"/><circle cx="463.2" cy="356.6" r="3"/><circle cx="583.3" cy="353.3" r="3"/><circle cx="492.6" cy="215" r="3"/><circle cx="618.9" cy="233.6" r="3"/><circle cx="642.6" cy="157.6" r="3"/><circle cx="710.8" cy="134.8" r="3"/><circle cx="580.4" cy="276.7" r="3"/><circle cx="689.6" cy="413.8" r="3"/><circle cx="296.2" cy="486.2" r="3"/><circle cx="383.7" cy="521.2" r="3"/><circle cx="273" cy="562.4" r="3"/><circle cx="145.4" cy="565.9" r="3"/><circle cx="137.6" cy="648.7" r="3"/><circle cx="367.4" cy="632.2" r="3"/><circle cx="296.8" cy="664" r="3"/><circle cx="241.6" cy="684.5" r="3"/><circle cx="287.1" cy="718.6" r="3"/><circle cx="13.6" cy="759.5" r="3"/><circle cx="157.2" cy="775.2" r="3"/><circle cx="430.9" cy="7.4" r="3"/></g><circle cx="420.3" cy="72.3" r="4.5" fill="none" stroke="#d0d0d0" stroke-width="1.6"/><circle cx="420.3" cy="72.3" r="2" fill="#d0d0d0"/><circle cx="140" cy="279.3" r="4.5" fill="none" stroke="#d0d0d0" stroke-width="1.6"/><circle cx="140" cy="279.3" r="2" fill="#d0d0d0"/><circle cx="120" cy="368.5" r="4.5" fill="none" stroke="#d0d0d0" stroke-width="1.6"/><circle cx="120" cy="368.5" r="2" fill="#d0d0d0"/><circle cx="46.5" cy="481.6" r="4.5" fill="none" stroke="#d0d0d0" stroke-width="1.6"/><circle cx="46.5" cy="481.6" r="2" fill="#d0d0d0"/><circle cx="559.1" cy="517.5" r="4.5" fill="none" stroke="#d0d0d0" stroke-width="1.6"/><circle cx="559.1" cy="517.5" r="2" fill="#d0d0d0"/><circle cx="416" cy="742.3" r="4.5" fill="none" stroke="#d0d0d0" stroke-width="1.6"/><circle cx="416" cy="742.3" r="2" fill="#d0d0d0"/><circle cx="708.6" cy="697.8" r="4.5" fill="none" stroke="#d0d0d0" stroke-width="1.6"/><circle cx="708.6" cy="697.8" r="2" fill="#d0d0d0"/><text x="288" y="61.5" textLength="80.5" lengthAdjust="spacingAndGlyphs" font-family="Liberation Sans" font-size="20" fill="#1c1c1c" stroke="#1c1c1c" stroke-width="3" stroke-linejoin="round">Denmark</text><text x="288" y="61.5" textLength="80.5" lengthAdjust="spacingAndGlyphs" font-family="Liberation Sans" font-size="20" fill="#a2a2a2" stroke="#a2a2a2" stroke-width="0.6">Denmark</text><text x="377" y="64.2" textLength="87" lengthAdjust="spacingAndGlyphs" font-family="Liberation Sans" font-size="16.5" fill="#1c1c1c" stroke="#1c1c1c" stroke-width="3" stroke-linejoin="round">Copenhagen</text><text x="377" y="64.2" textLength="87" lengthAdjust="spacingAndGlyphs" font-family="Liberation Sans" font-size="16.5" fill="#c6c6c6" stroke="#c6c6c6" stroke-width="0.25">Copenhagen</text><text x="673.5" y="127.9" textLength="76.5" lengthAdjust="spacingAndGlyphs" font-family="Liberation Sans" font-size="16.5" fill="#1c1c1c" stroke="#1c1c1c" stroke-width="3" stroke-linejoin="round">Kaliningrad</text><text x="673.5" y="127.9" textLength="76.5" lengthAdjust="spacingAndGlyphs" font-family="Liberation Sans" font-size="16.5" fill="#c6c6c6" stroke="#c6c6c6" stroke-width="0.25">Kaliningrad</text><text x="619.6" y="150.7" textLength="47.1" lengthAdjust="spacingAndGlyphs" font-family="Liberation Sans" font-size="16.5" fill="#1c1c1c" stroke="#1c1c1c" stroke-width="3" stroke-linejoin="round">Gdansk</text><text x="619.6" y="150.7" textLength="47.1" lengthAdjust="spacingAndGlyphs" font-family="Liberation Sans" font-size="16.5" fill="#c6c6c6" stroke="#c6c6c6" stroke-width="0.25">Gdansk</text><text x="319" y="152.3" textLength="25" lengthAdjust="spacingAndGlyphs" font-family="Liberation Sans" font-size="16.5" fill="#1c1c1c" stroke="#1c1c1c" stroke-width="3" stroke-linejoin="round">Kiel</text><text x="319" y="152.3" textLength="25" lengthAdjust="spacingAndGlyphs" font-family="Liberation Sans" font-size="16.5" fill="#c6c6c6" stroke="#c6c6c6" stroke-width="0.25">Kiel</text><text x="293.7" y="200.3" textLength="66" lengthAdjust="spacingAndGlyphs" font-family="Liberation Sans" font-size="16.5" fill="#1c1c1c" stroke="#1c1c1c" stroke-width="3" stroke-linejoin="round">Hamburg</text><text x="293.7" y="200.3" textLength="66" lengthAdjust="spacingAndGlyphs" font-family="Liberation Sans" font-size="16.5" fill="#c6c6c6" stroke="#c6c6c6" stroke-width="0.25">Hamburg</text><text x="257.4" y="229.2" textLength="51.6" lengthAdjust="spacingAndGlyphs" font-family="Liberation Sans" font-size="16.5" fill="#1c1c1c" stroke="#1c1c1c" stroke-width="3" stroke-linejoin="round">Bremen</text><text x="257.4" y="229.2" textLength="51.6" lengthAdjust="spacingAndGlyphs" font-family="Liberation Sans" font-size="16.5" fill="#c6c6c6" stroke="#c6c6c6" stroke-width="0.25">Bremen</text><text x="465.2" y="208.3" textLength="55.6" lengthAdjust="spacingAndGlyphs" font-family="Liberation Sans" font-size="16.5" fill="#1c1c1c" stroke="#1c1c1c" stroke-width="3" stroke-linejoin="round">Szczecin</text><text x="465.2" y="208.3" textLength="55.6" lengthAdjust="spacingAndGlyphs" font-family="Liberation Sans" font-size="16.5" fill="#c6c6c6" stroke="#c6c6c6" stroke-width="0.25">Szczecin</text><text x="585.8" y="226.7" textLength="66.7" lengthAdjust="spacingAndGlyphs" font-family="Liberation Sans" font-size="16.5" fill="#1c1c1c" stroke="#1c1c1c" stroke-width="3" stroke-linejoin="round">Bydgoszcz</text><text x="585.8" y="226.7" textLength="66.7" lengthAdjust="spacingAndGlyphs" font-family="Liberation Sans" font-size="16.5" fill="#c6c6c6" stroke="#c6c6c6" stroke-width="0.25">Bydgoszcz</text><text x="399.5" y="264.2" textLength="44.5" lengthAdjust="spacingAndGlyphs" font-family="Liberation Sans" font-size="17.5" fill="#1c1c1c" stroke="#1c1c1c" stroke-width="3" stroke-linejoin="round">Berlin</text><text x="399.5" y="264.2" textLength="44.5" lengthAdjust="spacingAndGlyphs" font-family="Liberation Sans" font-size="17.5" fill="#a2a2a2" stroke="#a2a2a2" stroke-width="0.6">Berlin</text><text x="147.4" y="273.3" textLength="81.8" lengthAdjust="spacingAndGlyphs" font-family="Liberation Sans" font-size="16.5" fill="#1c1c1c" stroke="#1c1c1c" stroke-width="3" stroke-linejoin="round">Amsterdam</text><text x="147.4" y="273.3" textLength="81.8" lengthAdjust="spacingAndGlyphs" font-family="Liberation Sans" font-size="16.5" fill="#c6c6c6" stroke="#c6c6c6" stroke-width="0.25">Amsterdam</text><text x="290.9" y="272.2" textLength="52.9" lengthAdjust="spacingAndGlyphs" font-family="Liberation Sans" font-size="16.5" fill="#1c1c1c" stroke="#1c1c1c" stroke-width="3" stroke-linejoin="round">Hanover</text><text x="290.9" y="272.2" textLength="52.9" lengthAdjust="spacingAndGlyphs" font-family="Liberation Sans" font-size="16.5" fill="#c6c6c6" stroke="#c6c6c6" stroke-width="0.25">Hanover</text><text x="556.4" y="269" textLength="47.3" lengthAdjust="spacingAndGlyphs" font-family="Liberation Sans" font-size="16.5" fill="#1c1c1c" stroke="#1c1c1c" stroke-width="3" stroke-linejoin="round">Poznań</text><text x="556.4" y="269" textLength="47.3" lengthAdjust="spacingAndGlyphs" font-family="Liberation Sans" font-size="16.5" fill="#c6c6c6" stroke="#c6c6c6" stroke-width="0.25">Poznań</text><text x="636" y="300" textLength="61" lengthAdjust="spacingAndGlyphs" font-family="Liberation Sans" font-size="20" fill="#1c1c1c" stroke="#1c1c1c" stroke-width="3" stroke-linejoin="round">Poland</text><text x="636" y="300" textLength="61" lengthAdjust="spacingAndGlyphs" font-family="Liberation Sans" font-size="20" fill="#a2a2a2" stroke="#a2a2a2" stroke-width="0.6">Poland</text><text x="121.6" y="308.5" textLength="91" lengthAdjust="spacingAndGlyphs" font-family="Liberation Sans" font-size="17" fill="#1c1c1c" stroke="#1c1c1c" stroke-width="3" stroke-linejoin="round">Netherlands</text><text x="121.6" y="308.5" textLength="91" lengthAdjust="spacingAndGlyphs" font-family="Liberation Sans" font-size="17" fill="#a2a2a2" stroke="#a2a2a2" stroke-width="0.6">Netherlands</text><text x="171.7" y="339.2" textLength="75.8" lengthAdjust="spacingAndGlyphs" font-family="Liberation Sans" font-size="16.5" fill="#1c1c1c" stroke="#1c1c1c" stroke-width="3" stroke-linejoin="round">Dusseldorf</text><text x="171.7" y="339.2" textLength="75.8" lengthAdjust="spacingAndGlyphs" font-family="Liberation Sans" font-size="16.5" fill="#c6c6c6" stroke="#c6c6c6" stroke-width="0.25">Dusseldorf</text><text x="288.4" y="358.6" textLength="78.3" lengthAdjust="spacingAndGlyphs" font-family="Liberation Sans" font-size="19" fill="#1c1c1c" stroke="#1c1c1c" stroke-width="3" stroke-linejoin="round">Germany</text><text x="288.4" y="358.6" textLength="78.3" lengthAdjust="spacingAndGlyphs" font-family="Liberation Sans" font-size="19" fill="#a2a2a2" stroke="#a2a2a2" stroke-width="0.6">Germany</text><text x="90" y="359.7" textLength="61.6" lengthAdjust="spacingAndGlyphs" font-family="Liberation Sans" font-size="16.5" fill="#1c1c1c" stroke="#1c1c1c" stroke-width="3" stroke-linejoin="round">Brussels</text><text x="90" y="359.7" textLength="61.6" lengthAdjust="spacingAndGlyphs" font-family="Liberation Sans" font-size="16.5" fill="#c6c6c6" stroke="#c6c6c6" stroke-width="0.25">Brussels</text><text x="436" y="349.7" textLength="54.7" lengthAdjust="spacingAndGlyphs" font-family="Liberation Sans" font-size="16.5" fill="#1c1c1c" stroke="#1c1c1c" stroke-width="3" stroke-linejoin="round">Dresden</text><text x="436" y="349.7" textLength="54.7" lengthAdjust="spacingAndGlyphs" font-family="Liberation Sans" font-size="16.5" fill="#c6c6c6" stroke="#c6c6c6" stroke-width="0.25">Dresden</text><text x="556" y="346.2" textLength="55" lengthAdjust="spacingAndGlyphs" font-family="Liberation Sans" font-size="16.5" fill="#1c1c1c" stroke="#1c1c1c" stroke-width="3" stroke-linejoin="round">Wrocław</text><text x="556" y="346.2" textLength="55" lengthAdjust="spacingAndGlyphs" font-family="Liberation Sans" font-size="16.5" fill="#c6c6c6" stroke="#c6c6c6" stroke-width="0.25">Wrocław</text><text x="99.2" y="398" textLength="62" lengthAdjust="spacingAndGlyphs" font-family="Liberation Sans" font-size="17" fill="#1c1c1c" stroke="#1c1c1c" stroke-width="3" stroke-linejoin="round">Belgium</text><text x="99.2" y="398" textLength="62" lengthAdjust="spacingAndGlyphs" font-family="Liberation Sans" font-size="17" fill="#a2a2a2" stroke="#a2a2a2" stroke-width="0.6">Belgium</text><text x="142" y="435" textLength="83" lengthAdjust="spacingAndGlyphs" font-family="Liberation Sans" font-size="15.5" fill="#1c1c1c" stroke="#1c1c1c" stroke-width="3" stroke-linejoin="round">Luxembourg</text><text x="142" y="435" textLength="83" lengthAdjust="spacingAndGlyphs" font-family="Liberation Sans" font-size="15.5" fill="#a2a2a2" stroke="#a2a2a2" stroke-width="0.6">Luxembourg</text><text x="286" y="427.4" textLength="65.5" lengthAdjust="spacingAndGlyphs" font-family="Liberation Sans" font-size="16.5" fill="#1c1c1c" stroke="#1c1c1c" stroke-width="3" stroke-linejoin="round">Frankfurt</text><text x="286" y="427.4" textLength="65.5" lengthAdjust="spacingAndGlyphs" font-family="Liberation Sans" font-size="16.5" fill="#c6c6c6" stroke="#c6c6c6" stroke-width="0.25">Frankfurt</text><text x="663.8" y="405.5" textLength="52" lengthAdjust="spacingAndGlyphs" font-family="Liberation Sans" font-size="16.5" fill="#1c1c1c" stroke="#1c1c1c" stroke-width="3" stroke-linejoin="round">Krakow</text><text x="663.8" y="405.5" textLength="52" lengthAdjust="spacingAndGlyphs" font-family="Liberation Sans" font-size="16.5" fill="#c6c6c6" stroke="#c6c6c6" stroke-width="0.25">Krakow</text><text x="493.9" y="437.4" textLength="56.1" lengthAdjust="spacingAndGlyphs" font-family="Liberation Sans" font-size="17.5" fill="#1c1c1c" stroke="#1c1c1c" stroke-width="3" stroke-linejoin="round">Czechia</text><text x="493.9" y="437.4" textLength="56.1" lengthAdjust="spacingAndGlyphs" font-family="Liberation Sans" font-size="17.5" fill="#a2a2a2" stroke="#a2a2a2" stroke-width="0.6">Czechia</text><text x="55.3" y="475.8" textLength="36.9" lengthAdjust="spacingAndGlyphs" font-family="Liberation Sans" font-size="16.5" fill="#1c1c1c" stroke="#1c1c1c" stroke-width="3" stroke-linejoin="round">Paris</text><text x="55.3" y="475.8" textLength="36.9" lengthAdjust="spacingAndGlyphs" font-family="Liberation Sans" font-size="16.5" fill="#c6c6c6" stroke="#c6c6c6" stroke-width="0.25">Paris</text><text x="268.9" y="479.3" textLength="56.2" lengthAdjust="spacingAndGlyphs" font-family="Liberation Sans" font-size="16.5" fill="#1c1c1c" stroke="#1c1c1c" stroke-width="3" stroke-linejoin="round">Stuttgart</text><text x="268.9" y="479.3" textLength="56.2" lengthAdjust="spacingAndGlyphs" font-family="Liberation Sans" font-size="16.5" fill="#c6c6c6" stroke="#c6c6c6" stroke-width="0.25">Stuttgart</text><text x="645.6" y="495" textLength="55.8" lengthAdjust="spacingAndGlyphs" font-family="Liberation Sans" font-size="16.5" fill="#1c1c1c" stroke="#1c1c1c" stroke-width="3" stroke-linejoin="round">Slovakia</text><text x="645.6" y="495" textLength="55.8" lengthAdjust="spacingAndGlyphs" font-family="Liberation Sans" font-size="16.5" fill="#a2a2a2" stroke="#a2a2a2" stroke-width="0.6">Slovakia</text><text x="359.5" y="513" textLength="49.8" lengthAdjust="spacingAndGlyphs" font-family="Liberation Sans" font-size="16.5" fill="#1c1c1c" stroke="#1c1c1c" stroke-width="3" stroke-linejoin="round">Munich</text><text x="359.5" y="513" textLength="49.8" lengthAdjust="spacingAndGlyphs" font-family="Liberation Sans" font-size="16.5" fill="#c6c6c6" stroke="#c6c6c6" stroke-width="0.25">Munich</text><text x="505.5" y="511.7" textLength="46.7" lengthAdjust="spacingAndGlyphs" font-family="Liberation Sans" font-size="16.5" fill="#1c1c1c" stroke="#1c1c1c" stroke-width="3" stroke-linejoin="round">Vienna</text><text x="505.5" y="511.7" textLength="46.7" lengthAdjust="spacingAndGlyphs" font-family="Liberation Sans" font-size="16.5" fill="#c6c6c6" stroke="#c6c6c6" stroke-width="0.25">Vienna</text><text x="27.3" y="545.8" textLength="59.9" lengthAdjust="spacingAndGlyphs" font-family="Liberation Sans" font-size="20" fill="#1c1c1c" stroke="#1c1c1c" stroke-width="3" stroke-linejoin="round">France</text><text x="27.3" y="545.8" textLength="59.9" lengthAdjust="spacingAndGlyphs" font-family="Liberation Sans" font-size="20" fill="#a2a2a2" stroke="#a2a2a2" stroke-width="0.6">France</text><text x="456.3" y="556.3" textLength="54.1" lengthAdjust="spacingAndGlyphs" font-family="Liberation Sans" font-size="17.5" fill="#1c1c1c" stroke="#1c1c1c" stroke-width="3" stroke-linejoin="round">Austria</text><text x="456.3" y="556.3" textLength="54.1" lengthAdjust="spacingAndGlyphs" font-family="Liberation Sans" font-size="17.5" fill="#a2a2a2" stroke="#a2a2a2" stroke-width="0.6">Austria</text><text x="280" y="557.5" textLength="44" lengthAdjust="spacingAndGlyphs" font-family="Liberation Sans" font-size="16.5" fill="#1c1c1c" stroke="#1c1c1c" stroke-width="3" stroke-linejoin="round">Zurich</text><text x="280" y="557.5" textLength="44" lengthAdjust="spacingAndGlyphs" font-family="Liberation Sans" font-size="16.5" fill="#c6c6c6" stroke="#c6c6c6" stroke-width="0.25">Zurich</text><text x="129.3" y="559.2" textLength="32.2" lengthAdjust="spacingAndGlyphs" font-family="Liberation Sans" font-size="16.5" fill="#1c1c1c" stroke="#1c1c1c" stroke-width="3" stroke-linejoin="round">Dijon</text><text x="129.3" y="559.2" textLength="32.2" lengthAdjust="spacingAndGlyphs" font-family="Liberation Sans" font-size="16.5" fill="#c6c6c6" stroke="#c6c6c6" stroke-width="0.25">Dijon</text><text x="637.2" y="587" textLength="73.7" lengthAdjust="spacingAndGlyphs" font-family="Liberation Sans" font-size="20" fill="#1c1c1c" stroke="#1c1c1c" stroke-width="3" stroke-linejoin="round">Hungary</text><text x="637.2" y="587" textLength="73.7" lengthAdjust="spacingAndGlyphs" font-family="Liberation Sans" font-size="20" fill="#a2a2a2" stroke="#a2a2a2" stroke-width="0.6">Hungary</text><text x="217.7" y="599.6" textLength="88.1" lengthAdjust="spacingAndGlyphs" font-family="Liberation Sans" font-size="17" fill="#1c1c1c" stroke="#1c1c1c" stroke-width="3" stroke-linejoin="round">Switzerland</text><text x="217.7" y="599.6" textLength="88.1" lengthAdjust="spacingAndGlyphs" font-family="Liberation Sans" font-size="17" fill="#a2a2a2" stroke="#a2a2a2" stroke-width="0.6">Switzerland</text><text x="347.7" y="625.1" textLength="40.8" lengthAdjust="spacingAndGlyphs" font-family="Liberation Sans" font-size="16.5" fill="#1c1c1c" stroke="#1c1c1c" stroke-width="3" stroke-linejoin="round">Trento</text><text x="347.7" y="625.1" textLength="40.8" lengthAdjust="spacingAndGlyphs" font-family="Liberation Sans" font-size="16.5" fill="#c6c6c6" stroke="#c6c6c6" stroke-width="0.25">Trento</text><text x="469.6" y="632.6" textLength="56.6" lengthAdjust="spacingAndGlyphs" font-family="Liberation Sans" font-size="16.5" fill="#1c1c1c" stroke="#1c1c1c" stroke-width="3" stroke-linejoin="round">Slovenia</text><text x="469.6" y="632.6" textLength="56.6" lengthAdjust="spacingAndGlyphs" font-family="Liberation Sans" font-size="16.5" fill="#a2a2a2" stroke="#a2a2a2" stroke-width="0.6">Slovenia</text><text x="123.7" y="642" textLength="28.9" lengthAdjust="spacingAndGlyphs" font-family="Liberation Sans" font-size="16.5" fill="#1c1c1c" stroke="#1c1c1c" stroke-width="3" stroke-linejoin="round">Lyon</text><text x="123.7" y="642" textLength="28.9" lengthAdjust="spacingAndGlyphs" font-family="Liberation Sans" font-size="16.5" fill="#c6c6c6" stroke="#c6c6c6" stroke-width="0.25">Lyon</text><text x="278.3" y="655.8" textLength="37.8" lengthAdjust="spacingAndGlyphs" font-family="Liberation Sans" font-size="16.5" fill="#1c1c1c" stroke="#1c1c1c" stroke-width="3" stroke-linejoin="round">Milan</text><text x="278.3" y="655.8" textLength="37.8" lengthAdjust="spacingAndGlyphs" font-family="Liberation Sans" font-size="16.5" fill="#c6c6c6" stroke="#c6c6c6" stroke-width="0.25">Milan</text><text x="544.3" y="659" textLength="52.9" lengthAdjust="spacingAndGlyphs" font-family="Liberation Sans" font-size="17.5" fill="#1c1c1c" stroke="#1c1c1c" stroke-width="3" stroke-linejoin="round">Croatia</text><text x="544.3" y="659" textLength="52.9" lengthAdjust="spacingAndGlyphs" font-family="Liberation Sans" font-size="17.5" fill="#a2a2a2" stroke="#a2a2a2" stroke-width="0.6">Croatia</text><text x="224.2" y="676.7" textLength="36.4" lengthAdjust="spacingAndGlyphs" font-family="Liberation Sans" font-size="16.5" fill="#1c1c1c" stroke="#1c1c1c" stroke-width="3" stroke-linejoin="round">Turin</text><text x="224.2" y="676.7" textLength="36.4" lengthAdjust="spacingAndGlyphs" font-family="Liberation Sans" font-size="16.5" fill="#c6c6c6" stroke="#c6c6c6" stroke-width="0.25">Turin</text><text x="677" y="689.1" textLength="64" lengthAdjust="spacingAndGlyphs" font-family="Liberation Sans" font-size="16.5" fill="#1c1c1c" stroke="#1c1c1c" stroke-width="3" stroke-linejoin="round">Belgrade</text><text x="677" y="689.1" textLength="64" lengthAdjust="spacingAndGlyphs" font-family="Liberation Sans" font-size="16.5" fill="#c6c6c6" stroke="#c6c6c6" stroke-width="0.25">Belgrade</text><text x="267.9" y="711.8" textLength="39.4" lengthAdjust="spacingAndGlyphs" font-family="Liberation Sans" font-size="16.5" fill="#1c1c1c" stroke="#1c1c1c" stroke-width="3" stroke-linejoin="round">Genoa</text><text x="267.9" y="711.8" textLength="39.4" lengthAdjust="spacingAndGlyphs" font-family="Liberation Sans" font-size="16.5" fill="#c6c6c6" stroke="#c6c6c6" stroke-width="0.25">Genoa</text><text x="380" y="716.7" textLength="72.4" lengthAdjust="spacingAndGlyphs" font-family="Liberation Sans" font-size="16.5" fill="#1c1c1c" stroke="#1c1c1c" stroke-width="3" stroke-linejoin="round">City of San</text><text x="380" y="716.7" textLength="72.4" lengthAdjust="spacingAndGlyphs" font-family="Liberation Sans" font-size="16.5" fill="#c6c6c6" stroke="#c6c6c6" stroke-width="0.25">City of San</text><text x="576.2" y="728" textLength="70.8" lengthAdjust="spacingAndGlyphs" font-family="Liberation Sans" font-size="16" fill="#1c1c1c" stroke="#1c1c1c" stroke-width="3" stroke-linejoin="round">Bosnia and</text><text x="576.2" y="728" textLength="70.8" lengthAdjust="spacingAndGlyphs" font-family="Liberation Sans" font-size="16" fill="#a2a2a2" stroke="#a2a2a2" stroke-width="0.6">Bosnia and</text><text x="392.4" y="734.9" textLength="48.6" lengthAdjust="spacingAndGlyphs" font-family="Liberation Sans" font-size="16.5" fill="#1c1c1c" stroke="#1c1c1c" stroke-width="3" stroke-linejoin="round">Marino</text><text x="392.4" y="734.9" textLength="48.6" lengthAdjust="spacingAndGlyphs" font-family="Liberation Sans" font-size="16.5" fill="#c6c6c6" stroke="#c6c6c6" stroke-width="0.25">Marino</text><text x="696.5" y="733.6" textLength="47.9" lengthAdjust="spacingAndGlyphs" font-family="Liberation Sans" font-size="18" fill="#1c1c1c" stroke="#1c1c1c" stroke-width="3" stroke-linejoin="round">Serbia</text><text x="696.5" y="733.6" textLength="47.9" lengthAdjust="spacingAndGlyphs" font-family="Liberation Sans" font-size="18" fill="#a2a2a2" stroke="#a2a2a2" stroke-width="0.6">Serbia</text><text x="570.3" y="743.9" textLength="82.1" lengthAdjust="spacingAndGlyphs" font-family="Liberation Sans" font-size="16" fill="#1c1c1c" stroke="#1c1c1c" stroke-width="3" stroke-linejoin="round">Herzegovina</text><text x="570.3" y="743.9" textLength="82.1" lengthAdjust="spacingAndGlyphs" font-family="Liberation Sans" font-size="16" fill="#a2a2a2" stroke="#a2a2a2" stroke-width="0.6">Herzegovina</text><text x="-1" y="752" textLength="44" lengthAdjust="spacingAndGlyphs" font-family="Liberation Sans" font-size="16.5" fill="#1c1c1c" stroke="#1c1c1c" stroke-width="3" stroke-linejoin="round">ulouse</text><text x="-1" y="752" textLength="44" lengthAdjust="spacingAndGlyphs" font-family="Liberation Sans" font-size="16.5" fill="#c6c6c6" stroke="#c6c6c6" stroke-width="0.25">ulouse</text><text x="85.9" y="789" textLength="64.9" lengthAdjust="spacingAndGlyphs" font-family="Liberation Sans" font-size="16.5" fill="#1c1c1c" stroke="#1c1c1c" stroke-width="3" stroke-linejoin="round">Marseille</text><text x="85.9" y="789" textLength="64.9" lengthAdjust="spacingAndGlyphs" font-family="Liberation Sans" font-size="16.5" fill="#c6c6c6" stroke="#c6c6c6" stroke-width="0.25">Marseille</text><text x="405" y="3.5" textLength="53" lengthAdjust="spacingAndGlyphs" font-family="Liberation Sans" font-size="16.5" fill="#1c1c1c" stroke="#1c1c1c" stroke-width="3" stroke-linejoin="round">Halmstad</text><text x="405" y="3.5" textLength="53" lengthAdjust="spacingAndGlyphs" font-family="Liberation Sans" font-size="16.5" fill="#c6c6c6" stroke="#c6c6c6" stroke-width="0.25">Halmstad</text><circle cx="272.2" cy="205.6" r="10.3" fill="#1313b8"/><circle cx="107.5" cy="303.2" r="10.6" fill="#dcdcdc"/><circle cx="117" cy="342.7" r="10.5" fill="#1313b8"/><circle cx="414.2" cy="337.5" r="10.4" fill="#efd062"/><circle cx="274.1" cy="415.9" r="10.5" fill="#3a36e0"/><circle cx="192" cy="438.3" r="10.3" fill="#3a36e0"/><circle cx="188.6" cy="438.3" r="10.3" fill="#efd062"/><circle cx="208.3" cy="428.9" r="10.3" fill="#3a9a48"/><circle cx="224.3" cy="465.2" r="10.3" fill="#efd062"/><circle cx="246.6" cy="448.5" r="10.3" fill="#3a36e0"/><circle cx="252.5" cy="446.7" r="10.3" fill="#98ee88"/><circle cx="278" cy="446" r="10.3" fill="#f07030"/><circle cx="275.9" cy="442.6" r="10.3" fill="#4ab0e0"/><circle cx="270.6" cy="443.8" r="10.3" fill="#b080e0"/><circle cx="271.8" cy="450.2" r="10.3" fill="#f07030"/><circle cx="384.8" cy="657.3" r="10.3" fill="#4aabe3"/><circle cx="451.6" cy="271.6" r="15.6" fill="none" stroke="#2fcb78" stroke-width="10"/><circle cx="451.6" cy="271.6" r="10.5" fill="#dcc8ee"/><ellipse cx="717.7" cy="767" rx="15.5" ry="14" fill="#9a9a9a"/><ellipse cx="717.7" cy="763" rx="15.5" ry="14" fill="#ffffff"/><rect x="665" y="6.7" width="35" height="29" rx="2" fill="#bdbdbd"/><rect x="706" y="6.7" width="33" height="29" rx="2" fill="#bdbdbd"/><g stroke="#5a5a5a" stroke-width="1.6" fill="none" transform="translate(674,13)"><path d="M6 1v5H1M11 1v5h5M6 16v-5H1M11 16v-5h5"/></g><g stroke="#5a5a5a" stroke-width="2" transform="translate(714.5,13.5)"><path d="M0 2h16M0 8h16M0 14h16"/></g><rect x="0" y="0" width="746" height="1.5" fill="#141414"/></svg></div>
  <div class="t" style="left:20px;top:880px;font-size:16.3px;letter-spacing:0.63px;color:#666">No further context information available for current selection:</div><div class="a" style="left:20px;top:900px;width:112px;height:27px;background:#fafafa;border:1px solid #e8e8e8;border-radius:3px"></div><div class="t" style="left:30px;top:906px;font-size:16px;letter-spacing:-0.4px;color:#555">ASSET_ID | <span style="color:#4ba3ee">3</span></div><div class="a" style="left:139px;top:900px;width:265px;height:27px;background:#fafafa;border:1px solid #e8e8e8;border-radius:3px"></div><div class="t" style="left:149px;top:906px;font-size:16px;letter-spacing:0px;color:#555">ACTION_ID | <span style="color:#4ba3ee">GAAAAAAhgwAAAA</span></div>
</div>

<!-- EXPLORE -->
<div class="a card" style="left:1669px;top:73px;width:359px;height:1028px;overflow:hidden">
  <div class="t" style="left:31px;top:27px;font-size:20px;letter-spacing:0.16px;color:#1f1f1f;-webkit-text-stroke:0.2px #1f1f1f">Explore further</div>
  <div class="a" style="left:0;top:71px;width:359px;height:1px;background:#eee"></div><div class="a" style="left:0;top:145px;width:359px;height:742px;background:#fafafa"></div><div class="a" style="left:0;top:949px;width:359px;height:79px;background:#fafafa"></div><div class="a" style="left:0;top:71px;width:359px;height:74px;background:#fff"></div><div class="t" style="left:31px;top:107.19999999999999px;font-size:16.3px;letter-spacing:0.55px;color:#555">Followups</div><svg class="a" style="left:324px;top:110px" width="12" height="9" viewBox="0 0 12 9"><path d="M1 7.5l5-5 5 5" fill="none" stroke="#333" stroke-width="2"/></svg><div class="a" style="left:0;top:887px;width:359px;height:62px;background:#fff"></div><div class="t" style="left:31px;top:909.5px;font-size:16.3px;letter-spacing:0.55px;color:#555">Also about Resources</div><svg class="a" style="left:324px;top:913.5px" width="12" height="9" viewBox="0 0 12 9"><path d="M1 7.5l5-5 5 5" fill="none" stroke="#333" stroke-width="2"/></svg><div class="a" style="left:0;top:71px;width:359px;height:1px;background:#eee"></div><svg class="a" style="left:62px;top:168px" width="19" height="18" viewBox="0 0 19 18"><path fill-rule="evenodd" fill="#555" d="M10.60 9.00L10.53 9.81L11.86 10.29L11.05 12.23L9.77 11.63L9.25 12.25L8.63 12.77L9.23 14.05L7.29 14.86L6.81 13.53L6.00 13.60L5.19 13.53L4.71 14.86L2.77 14.05L3.37 12.77L2.75 12.25L2.23 11.63L0.95 12.23L0.14 10.29L1.47 9.81L1.40 9.00L1.47 8.19L0.14 7.71L0.95 5.77L2.23 6.37L2.75 5.75L3.37 5.23L2.77 3.95L4.71 3.14L5.19 4.47L6.00 4.40L6.81 4.47L7.29 3.14L9.23 3.95L8.63 5.23L9.25 5.75L9.77 6.37L11.05 5.77L11.86 7.71L10.53 8.19Z M4.00 9.00a2.00 2.00 0 1 0 4.00 0a2.00 2.00 0 1 0 -4.00 0Z M17.00 4.20L16.93 4.76L17.96 5.19L17.14 6.61L16.25 5.94L15.80 6.28L15.28 6.50L15.42 7.60L13.78 7.60L13.92 6.50L13.40 6.28L12.95 5.94L12.06 6.61L11.24 5.19L12.27 4.76L12.20 4.20L12.27 3.64L11.24 3.21L12.06 1.79L12.95 2.46L13.40 2.12L13.92 1.90L13.78 0.80L15.42 0.80L15.28 1.90L15.80 2.12L16.25 2.46L17.14 1.79L17.96 3.21L16.93 3.64Z M13.60 4.20a1.00 1.00 0 1 0 2.00 0a1.00 1.00 0 1 0 -2.00 0Z M17.00 13.70L16.93 14.26L17.96 14.69L17.14 16.11L16.25 15.44L15.80 15.78L15.28 16.00L15.42 17.10L13.78 17.10L13.92 16.00L13.40 15.78L12.95 15.44L12.06 16.11L11.24 14.69L12.27 14.26L12.20 13.70L12.27 13.14L11.24 12.71L12.06 11.29L12.95 11.96L13.40 11.62L13.92 11.40L13.78 10.30L15.42 10.30L15.28 11.40L15.80 11.62L16.25 11.96L17.14 11.29L17.96 12.71L16.93 13.14Z M13.60 13.70a1.00 1.00 0 1 0 2.00 0a1.00 1.00 0 1 0 -2.00 0Z"/></svg><div class="t" style="left:93px;top:169px;font-size:17px;letter-spacing:0.21px;color:#555">Data associated with actio...</div><svg class="a" style="left:325px;top:170px" width="16" height="15" viewBox="0 0 16 15"><g fill="none" stroke="#555" stroke-width="1.5" stroke-linejoin="round"><path d="M14 3.2V1H1v12.6h13v-2.2"/><path d="M6.2 7.3h6"/></g><path d="M11.5 4.8l3.2 2.5-3.2 2.5z" fill="#555"/></svg><svg class="a" style="left:62px;top:230px" width="20" height="18" viewBox="0 0 20 18"><g stroke="#555" stroke-width="1.2" stroke-linejoin="round"><path d="M10 1l4.5 2.3v4.5L10 10 5.5 7.8V3.3z" fill="#fafafa"/><path d="M5.5 3.3L10 5.5l4.5-2.2M10 5.5V10" fill="none"/><path d="M5.5 3.3v4.5L10 10V5.5z" fill="#555"/><path d="M5.3 8.3l4.5 2.3v4.5l-4.5 2.2L.8 15.1v-4.5z" fill="#fafafa"/><path d="M.8 10.6l4.5 2.2 4.5-2.2M5.3 12.8v4.5" fill="none"/><path d="M.8 10.6v4.5l4.5 2.2v-4.5z" fill="#555"/><path d="M14.7 8.3l4.5 2.3v4.5l-4.5 2.2-4.5-2.2v-4.5z" fill="#fafafa"/><path d="M10.2 10.6l4.5 2.2 4.5-2.2M14.7 12.8v4.5" fill="none"/><path d="M10.2 10.6v4.5l4.5 2.2v-4.5z" fill="#555"/></g></svg><div class="t" style="left:97px;top:231px;font-size:17px;letter-spacing:0.21px;color:#555">Details of asset 3</div><svg class="a" style="left:325px;top:232px" width="16" height="15" viewBox="0 0 16 15"><g fill="none" stroke="#555" stroke-width="1.5" stroke-linejoin="round"><path d="M14 3.2V1H1v12.6h13v-2.2"/><path d="M6.2 7.3h6"/></g><path d="M11.5 4.8l3.2 2.5-3.2 2.5z" fill="#555"/></svg><svg class="a" style="left:62px;top:292px" width="16" height="17" viewBox="0 0 16 17"><g fill="none" stroke="#555"><rect x="0.8" y="3.2" width="14.2" height="13" rx="1.2" stroke-width="1.4"/><path d="M0.8 5.2h14.2" stroke-width="2.6"/><path d="M4.6 7v9M8 7v9M11.4 7v9M0.8 10h14.2M0.8 13.2h14.2" stroke-width="1"/></g><g fill="#555"><rect x="3.2" y="0.5" width="2.6" height="4.5" rx="1.3"/><rect x="10.2" y="0.5" width="2.6" height="4.5" rx="1.3"/></g></svg><div class="t" style="left:93px;top:293px;font-size:17px;letter-spacing:0.21px;color:#555">History of shipments of as...</div><svg class="a" style="left:325px;top:294px" width="16" height="15" viewBox="0 0 16 15"><g fill="none" stroke="#555" stroke-width="1.5" stroke-linejoin="round"><path d="M14 3.2V1H1v12.6h13v-2.2"/><path d="M6.2 7.3h6"/></g><path d="M11.5 4.8l3.2 2.5-3.2 2.5z" fill="#555"/></svg><svg class="a" style="left:62px;top:353px" width="19" height="18" viewBox="0 0 19 18"><path fill-rule="evenodd" fill="#555" d="M10.60 9.00L10.53 9.81L11.86 10.29L11.05 12.23L9.77 11.63L9.25 12.25L8.63 12.77L9.23 14.05L7.29 14.86L6.81 13.53L6.00 13.60L5.19 13.53L4.71 14.86L2.77 14.05L3.37 12.77L2.75 12.25L2.23 11.63L0.95 12.23L0.14 10.29L1.47 9.81L1.40 9.00L1.47 8.19L0.14 7.71L0.95 5.77L2.23 6.37L2.75 5.75L3.37 5.23L2.77 3.95L4.71 3.14L5.19 4.47L6.00 4.40L6.81 4.47L7.29 3.14L9.23 3.95L8.63 5.23L9.25 5.75L9.77 6.37L11.05 5.77L11.86 7.71L10.53 8.19Z M4.00 9.00a2.00 2.00 0 1 0 4.00 0a2.00 2.00 0 1 0 -4.00 0Z M17.00 4.20L16.93 4.76L17.96 5.19L17.14 6.61L16.25 5.94L15.80 6.28L15.28 6.50L15.42 7.60L13.78 7.60L13.92 6.50L13.40 6.28L12.95 5.94L12.06 6.61L11.24 5.19L12.27 4.76L12.20 4.20L12.27 3.64L11.24 3.21L12.06 1.79L12.95 2.46L13.40 2.12L13.92 1.90L13.78 0.80L15.42 0.80L15.28 1.90L15.80 2.12L16.25 2.46L17.14 1.79L17.96 3.21L16.93 3.64Z M13.60 4.20a1.00 1.00 0 1 0 2.00 0a1.00 1.00 0 1 0 -2.00 0Z M17.00 13.70L16.93 14.26L17.96 14.69L17.14 16.11L16.25 15.44L15.80 15.78L15.28 16.00L15.42 17.10L13.78 17.10L13.92 16.00L13.40 15.78L12.95 15.44L12.06 16.11L11.24 14.69L12.27 14.26L12.20 13.70L12.27 13.14L11.24 12.71L12.06 11.29L12.95 11.96L13.40 11.62L13.92 11.40L13.78 10.30L15.42 10.30L15.28 11.40L15.80 11.62L16.25 11.96L17.14 11.29L17.96 12.71L16.93 13.14Z M13.60 13.70a1.00 1.00 0 1 0 2.00 0a1.00 1.00 0 1 0 -2.00 0Z"/></svg><div class="t" style="left:93px;top:354px;font-size:17px;letter-spacing:0.21px;color:#555">Shipments detection of as...</div><svg class="a" style="left:325px;top:356px" width="16" height="15" viewBox="0 0 16 15"><g fill="none" stroke="#555" stroke-width="1.5" stroke-linejoin="round"><path d="M14 3.2V1H1v12.6h13v-2.2"/><path d="M6.2 7.3h6"/></g><path d="M11.5 4.8l3.2 2.5-3.2 2.5z" fill="#555"/></svg><svg class="a" style="left:62px;top:416px" width="12" height="17" viewBox="0 0 12 17"><g fill="none" stroke="#555" stroke-width="1.3"><path d="M3 10.5V2.5a2 2 0 0 1 4 0v8a3.3 3.3 0 1 1-4 0z"/><path d="M9 2h2M9 4.5h2M9 7h2" stroke-width="1"/></g><circle cx="5" cy="13" r="1.5" fill="#555"/><path d="M5 6v6" stroke="#555" stroke-width="1.4"/></svg><div class="t" style="left:93px;top:416px;font-size:17px;letter-spacing:0.21px;color:#555">Temperature of asset 3</div><svg class="a" style="left:325px;top:418px" width="16" height="15" viewBox="0 0 16 15"><g fill="none" stroke="#555" stroke-width="1.5" stroke-linejoin="round"><path d="M14 3.2V1H1v12.6h13v-2.2"/><path d="M6.2 7.3h6"/></g><path d="M11.5 4.8l3.2 2.5-3.2 2.5z" fill="#555"/></svg><svg class="a" style="left:62px;top:478px" width="16" height="15" viewBox="0 0 16 15"><rect x="0.7" y="0.7" width="14.6" height="13.6" rx="1" fill="none" stroke="#555" stroke-width="1.4"/><g stroke="#555" stroke-width="1.3"><path d="M2.6 4.8h4M4.6 2.8v4M8.5 4.8h3.8M3 8.6l3.2 3.2M6.2 8.6L3 11.8M8.5 9.3h3.8M8.5 11.3h3.8"/></g></svg><div class="t" style="left:93px;top:478px;font-size:17px;letter-spacing:0.21px;color:#555">Client's info about asset 3</div><svg class="a" style="left:325px;top:480px" width="16" height="15" viewBox="0 0 16 15"><g fill="none" stroke="#555" stroke-width="1.5" stroke-linejoin="round"><path d="M14 3.2V1H1v12.6h13v-2.2"/><path d="M6.2 7.3h6"/></g><path d="M11.5 4.8l3.2 2.5-3.2 2.5z" fill="#555"/></svg><svg class="a" style="left:62px;top:540px" width="16" height="15" viewBox="0 0 16 15"><rect x="0.7" y="0.7" width="14.6" height="13.6" rx="1" fill="none" stroke="#555" stroke-width="1.4"/><g stroke="#555" stroke-width="1.3"><path d="M2.6 4.8h4M4.6 2.8v4M8.5 4.8h3.8M3 8.6l3.2 3.2M6.2 8.6L3 11.8M8.5 9.3h3.8M8.5 11.3h3.8"/></g></svg><div class="t" style="left:93px;top:540px;font-size:17px;letter-spacing:0.21px;color:#555">Details about device</div><svg class="a" style="left:325px;top:541px" width="16" height="15" viewBox="0 0 16 15"><g fill="none" stroke="#555" stroke-width="1.5" stroke-linejoin="round"><path d="M14 3.2V1H1v12.6h13v-2.2"/><path d="M6.2 7.3h6"/></g><path d="M11.5 4.8l3.2 2.5-3.2 2.5z" fill="#555"/></svg><svg class="a" style="left:62px;top:602px" width="16" height="15" viewBox="0 0 16 15"><rect x="0.7" y="0.7" width="14.6" height="13.6" rx="1" fill="none" stroke="#555" stroke-width="1.4"/><g stroke="#555" stroke-width="1.3"><path d="M2.6 4.8h4M4.6 2.8v4M8.5 4.8h3.8M3 8.6l3.2 3.2M6.2 8.6L3 11.8M8.5 9.3h3.8M8.5 11.3h3.8"/></g></svg><div class="t" style="left:93px;top:602px;font-size:17px;letter-spacing:0.21px;color:#555">Draw action</div><svg class="a" style="left:325px;top:603px" width="16" height="15" viewBox="0 0 16 15"><g fill="none" stroke="#555" stroke-width="1.5" stroke-linejoin="round"><path d="M14 3.2V1H1v12.6h13v-2.2"/><path d="M6.2 7.3h6"/></g><path d="M11.5 4.8l3.2 2.5-3.2 2.5z" fill="#555"/></svg><svg class="a" style="left:62px;top:664px" width="16" height="15" viewBox="0 0 16 15"><rect x="0.7" y="0.7" width="14.6" height="13.6" rx="1" fill="none" stroke="#555" stroke-width="1.4"/><g stroke="#555" stroke-width="1.3"><path d="M2.6 4.8h4M4.6 2.8v4M8.5 4.8h3.8M3 8.6l3.2 3.2M6.2 8.6L3 11.8M8.5 9.3h3.8M8.5 11.3h3.8"/></g></svg><div class="t" style="left:93px;top:663px;font-size:17px;letter-spacing:0.21px;color:#555">History of locations of acti...</div><svg class="a" style="left:325px;top:665px" width="16" height="15" viewBox="0 0 16 15"><g fill="none" stroke="#555" stroke-width="1.5" stroke-linejoin="round"><path d="M14 3.2V1H1v12.6h13v-2.2"/><path d="M6.2 7.3h6"/></g><path d="M11.5 4.8l3.2 2.5-3.2 2.5z" fill="#555"/></svg><svg class="a" style="left:62px;top:726px" width="16" height="15" viewBox="0 0 16 15"><rect x="0.7" y="0.7" width="14.6" height="13.6" rx="1" fill="none" stroke="#555" stroke-width="1.4"/><g stroke="#555" stroke-width="1.3"><path d="M2.6 4.8h4M4.6 2.8v4M8.5 4.8h3.8M3 8.6l3.2 3.2M6.2 8.6L3 11.8M8.5 9.3h3.8M8.5 11.3h3.8"/></g></svg><div class="t" style="left:93px;top:725px;font-size:17px;letter-spacing:0.21px;color:#555">History of shipments of as...</div><svg class="a" style="left:325px;top:727px" width="16" height="15" viewBox="0 0 16 15"><g fill="none" stroke="#555" stroke-width="1.5" stroke-linejoin="round"><path d="M14 3.2V1H1v12.6h13v-2.2"/><path d="M6.2 7.3h6"/></g><path d="M11.5 4.8l3.2 2.5-3.2 2.5z" fill="#555"/></svg><svg class="a" style="left:62px;top:788px" width="16" height="15" viewBox="0 0 16 15"><rect x="0.7" y="0.7" width="14.6" height="13.6" rx="1" fill="none" stroke="#555" stroke-width="1.4"/><g stroke="#555" stroke-width="1.3"><path d="M2.6 4.8h4M4.6 2.8v4M8.5 4.8h3.8M3 8.6l3.2 3.2M6.2 8.6L3 11.8M8.5 9.3h3.8M8.5 11.3h3.8"/></g></svg><div class="t" style="left:93px;top:787px;font-size:17px;letter-spacing:0.21px;color:#555">Last positions of asset 3</div><svg class="a" style="left:325px;top:788px" width="16" height="15" viewBox="0 0 16 15"><g fill="none" stroke="#555" stroke-width="1.5" stroke-linejoin="round"><path d="M14 3.2V1H1v12.6h13v-2.2"/><path d="M6.2 7.3h6"/></g><path d="M11.5 4.8l3.2 2.5-3.2 2.5z" fill="#555"/></svg><svg class="a" style="left:62px;top:849px" width="16" height="15" viewBox="0 0 16 15"><rect x="0.7" y="0.7" width="14.6" height="13.6" rx="1" fill="none" stroke="#555" stroke-width="1.4"/><g stroke="#555" stroke-width="1.3"><path d="M2.6 4.8h4M4.6 2.8v4M8.5 4.8h3.8M3 8.6l3.2 3.2M6.2 8.6L3 11.8M8.5 9.3h3.8M8.5 11.3h3.8"/></g></svg><div class="t" style="left:93px;top:849px;font-size:17px;letter-spacing:0.21px;color:#555">Path for action GAAAAAA...</div><svg class="a" style="left:325px;top:850px" width="16" height="15" viewBox="0 0 16 15"><g fill="none" stroke="#555" stroke-width="1.5" stroke-linejoin="round"><path d="M14 3.2V1H1v12.6h13v-2.2"/><path d="M6.2 7.3h6"/></g><path d="M11.5 4.8l3.2 2.5-3.2 2.5z" fill="#555"/></svg><svg class="a" style="left:62px;top:971px" width="20" height="18" viewBox="0 0 20 18"><g stroke="#555" stroke-width="1.2" stroke-linejoin="round"><path d="M10 1l4.5 2.3v4.5L10 10 5.5 7.8V3.3z" fill="#fafafa"/><path d="M5.5 3.3L10 5.5l4.5-2.2M10 5.5V10" fill="none"/><path d="M5.5 3.3v4.5L10 10V5.5z" fill="#555"/><path d="M5.3 8.3l4.5 2.3v4.5l-4.5 2.2L.8 15.1v-4.5z" fill="#fafafa"/><path d="M.8 10.6l4.5 2.2 4.5-2.2M5.3 12.8v4.5" fill="none"/><path d="M.8 10.6v4.5l4.5 2.2v-4.5z" fill="#555"/><path d="M14.7 8.3l4.5 2.3v4.5l-4.5 2.2-4.5-2.2v-4.5z" fill="#fafafa"/><path d="M10.2 10.6l4.5 2.2 4.5-2.2M14.7 12.8v4.5" fill="none"/><path d="M10.2 10.6v4.5l4.5 2.2v-4.5z" fill="#555"/></g></svg><div class="t" style="left:97px;top:972px;font-size:17px;letter-spacing:0.21px;color:#555">Asset utilization</div><svg class="a" style="left:325px;top:974px" width="16" height="15" viewBox="0 0 16 15"><g fill="none" stroke="#555" stroke-width="1.5" stroke-linejoin="round"><path d="M14 3.2V1H1v12.6h13v-2.2"/><path d="M6.2 7.3h6"/></g><path d="M11.5 4.8l3.2 2.5-3.2 2.5z" fill="#555"/></svg>
</div>
<div class="a" style="left:2020px;top:571px;width:1px;height:31px;background:#d8d8d8"></div><div class="a" style="left:2023px;top:571px;width:1px;height:31px;background:#d8d8d8"></div><div class="a" style="left:1991px;top:1059px;width:42px;height:42px;border-radius:50%;background:#fff;box-shadow:0 1px 4px rgba(0,0,0,0.18)"></div><svg class="a" style="left:1999px;top:1062px" width="25" height="36" viewBox="0 0 25 36"><defs><linearGradient id="cu1" x1="0" x2="1"><stop offset="0" stop-color="#f0f"/><stop offset="1" stop-color="#fa0"/></linearGradient><linearGradient id="cu2" x1="0" x2="1"><stop offset="0" stop-color="#8930fd"/><stop offset="1" stop-color="#49ccf9"/></linearGradient></defs><path d="M1.2 15.5L12.4 4.8l11.2 10.7" fill="none" stroke="url(#cu1)" stroke-width="5" stroke-linejoin="miter"/><path d="M1.8 25.5c3 3.5 6.5 5.6 10.6 5.6s7.6-2.1 10.6-5.6" fill="none" stroke="url(#cu2)" stroke-width="5"/></svg></body></html>
